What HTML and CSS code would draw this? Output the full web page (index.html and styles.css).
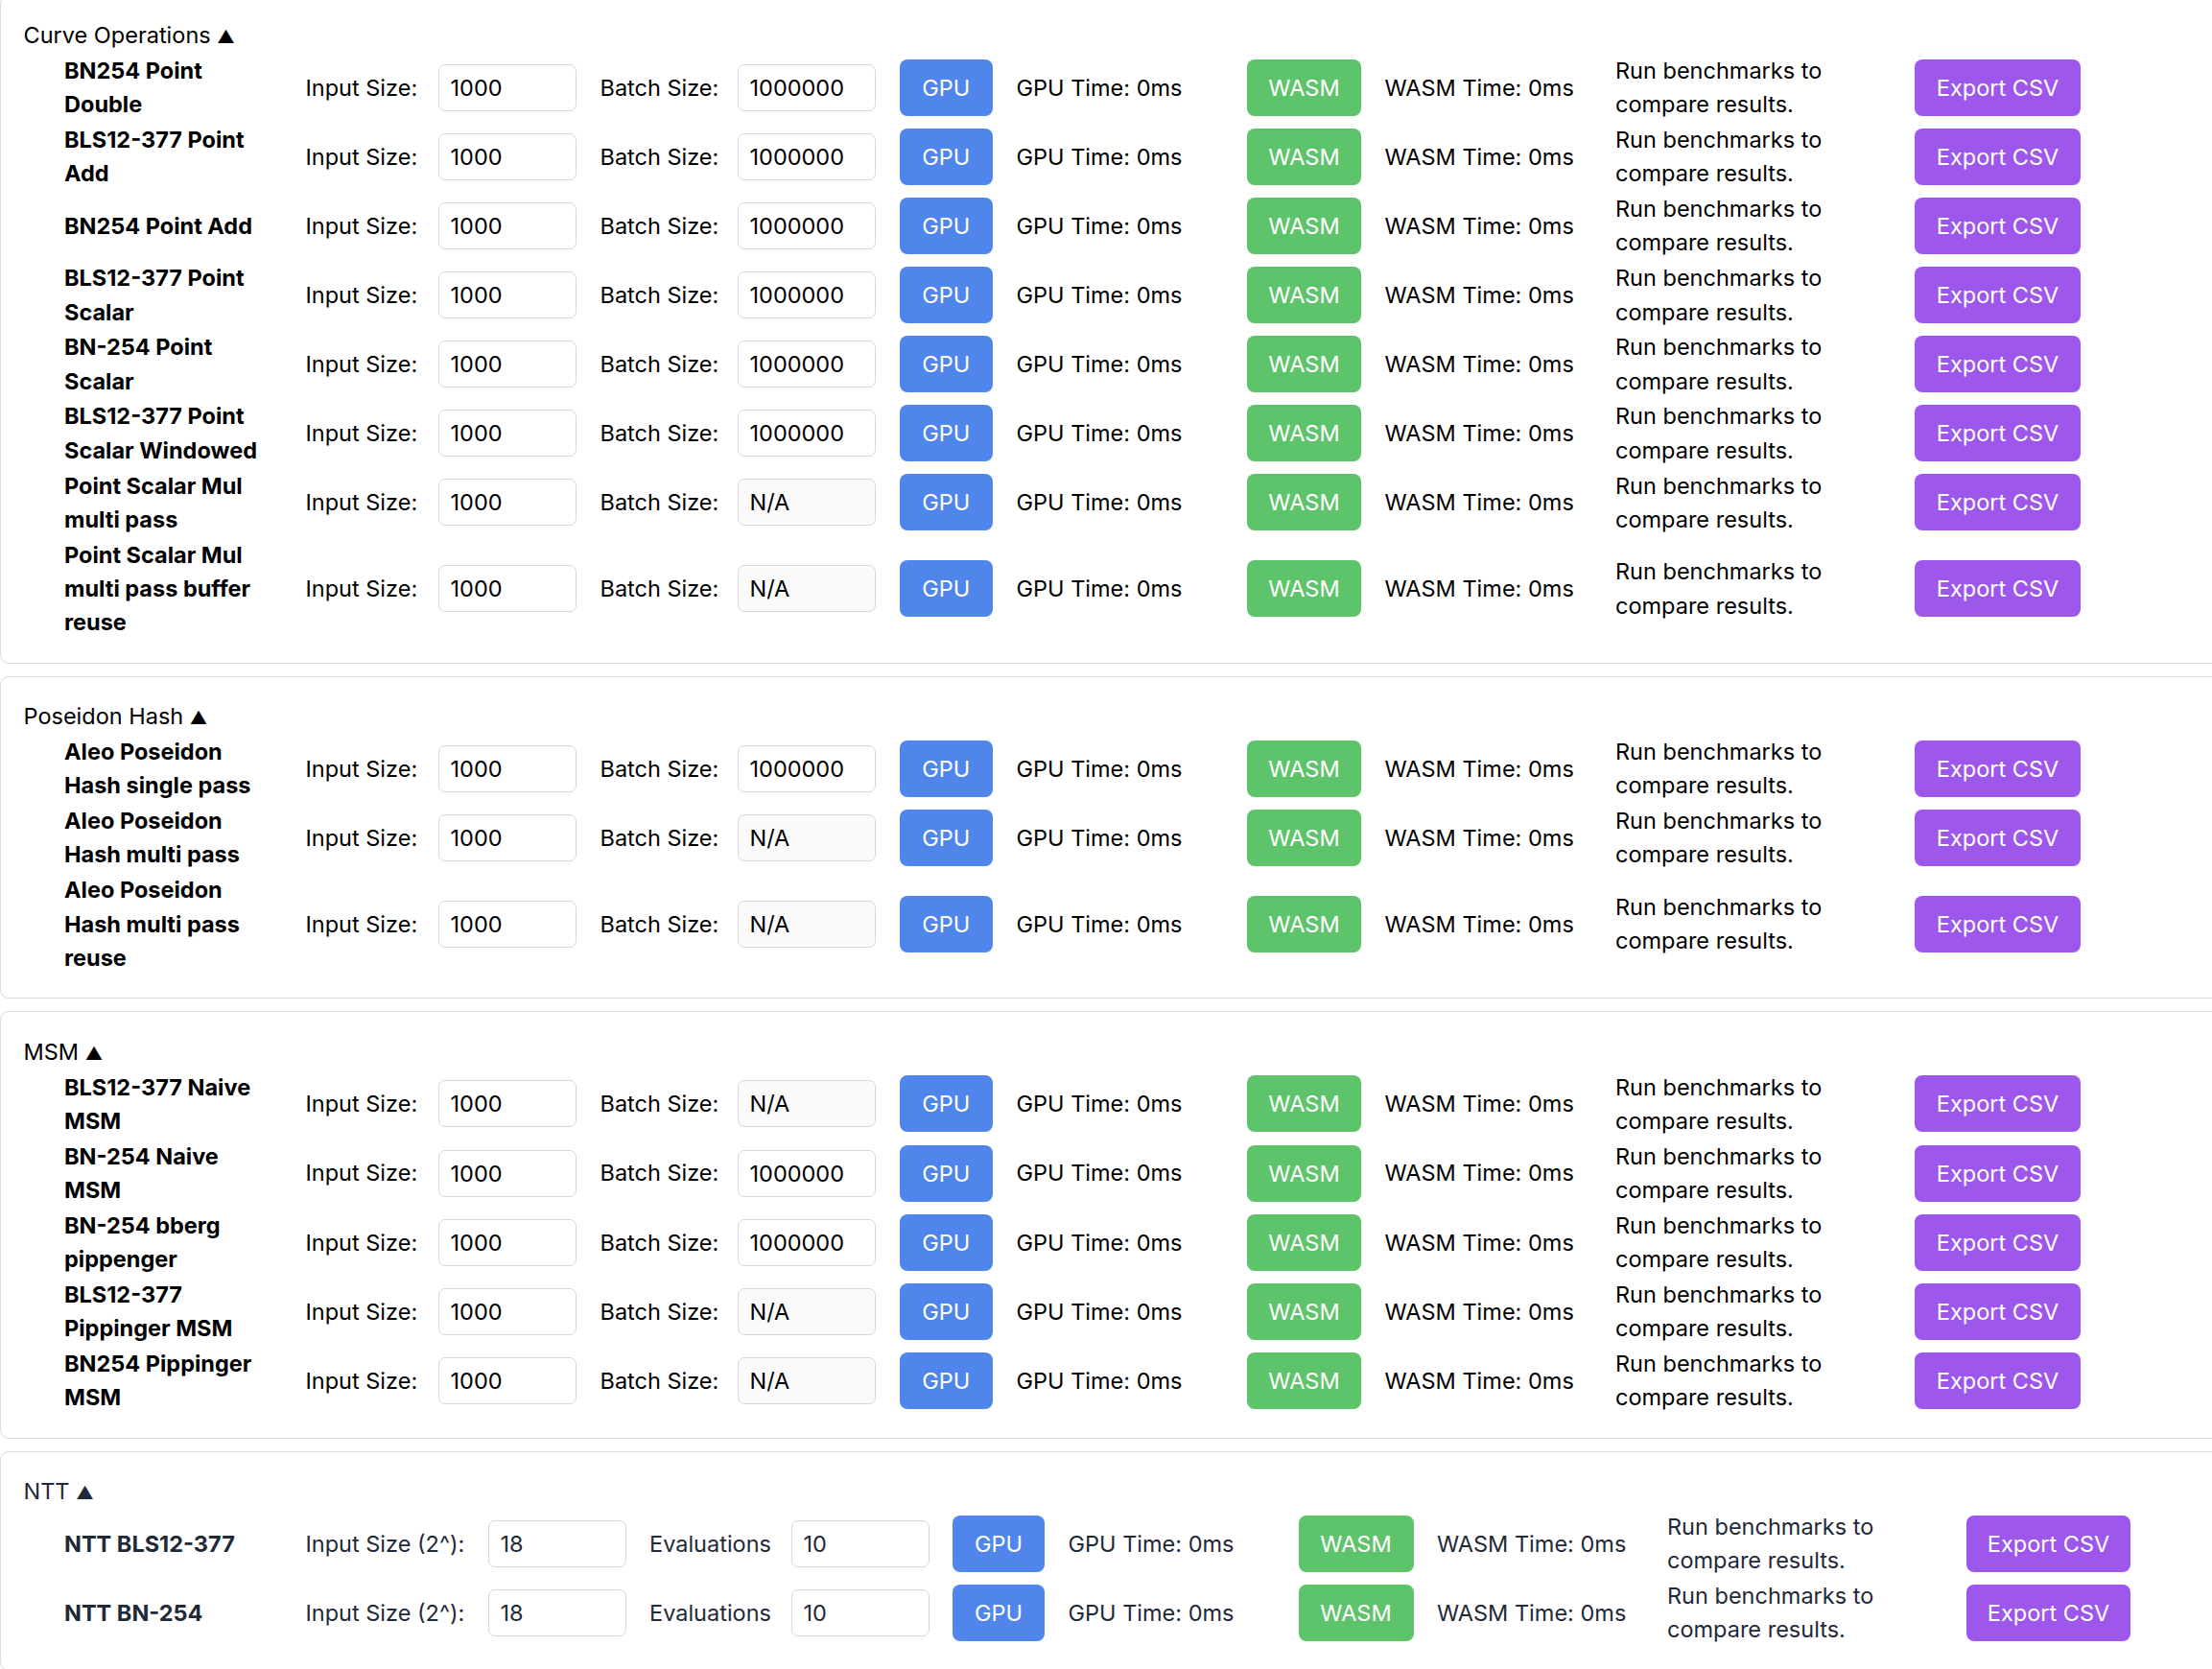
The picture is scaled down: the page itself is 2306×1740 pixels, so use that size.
FILE: index.html
```html
<!DOCTYPE html>
<html lang="en">
<head>
  <meta charset="UTF-8">
  <meta name="viewport" content="width=device-width, initial-scale=1.0">
  <title>WebGPU Benchmarks</title>
  <link rel="stylesheet" href="styles.css">
</head>
<body>

  <div class="page">

    <!-- Curve operations -->
    <section class="group">
      <div class="group-title">Curve Operations <span class="caret">▲</span></div>

      <div class="bench-row">
        <div class="bench-name">BN254 Point Double</div>
        <span class="field-label">Input Size:</span>
        <input class="field" type="text" value="1000">
        <span class="field-label">Batch Size:</span>
        <input class="field" type="text" value="1000000">
        <button class="btn btn-gpu">GPU</button>
        <span class="timing">GPU Time: 0ms</span>
        <button class="btn btn-wasm">WASM</button>
        <span class="timing">WASM Time: 0ms</span>
        <p class="result">Run benchmarks to compare results.</p>
        <button class="btn btn-export">Export CSV</button>
      </div>

      <div class="bench-row">
        <div class="bench-name">BLS12-377 Point Add</div>
        <span class="field-label">Input Size:</span>
        <input class="field" type="text" value="1000">
        <span class="field-label">Batch Size:</span>
        <input class="field" type="text" value="1000000">
        <button class="btn btn-gpu">GPU</button>
        <span class="timing">GPU Time: 0ms</span>
        <button class="btn btn-wasm">WASM</button>
        <span class="timing">WASM Time: 0ms</span>
        <p class="result">Run benchmarks to compare results.</p>
        <button class="btn btn-export">Export CSV</button>
      </div>

      <div class="bench-row">
        <div class="bench-name">BN254 Point Add</div>
        <span class="field-label">Input Size:</span>
        <input class="field" type="text" value="1000">
        <span class="field-label">Batch Size:</span>
        <input class="field" type="text" value="1000000">
        <button class="btn btn-gpu">GPU</button>
        <span class="timing">GPU Time: 0ms</span>
        <button class="btn btn-wasm">WASM</button>
        <span class="timing">WASM Time: 0ms</span>
        <p class="result">Run benchmarks to compare results.</p>
        <button class="btn btn-export">Export CSV</button>
      </div>

      <div class="bench-row">
        <div class="bench-name">BLS12-377 Point Scalar</div>
        <span class="field-label">Input Size:</span>
        <input class="field" type="text" value="1000">
        <span class="field-label">Batch Size:</span>
        <input class="field" type="text" value="1000000">
        <button class="btn btn-gpu">GPU</button>
        <span class="timing">GPU Time: 0ms</span>
        <button class="btn btn-wasm">WASM</button>
        <span class="timing">WASM Time: 0ms</span>
        <p class="result">Run benchmarks to compare results.</p>
        <button class="btn btn-export">Export CSV</button>
      </div>

      <div class="bench-row">
        <div class="bench-name">BN-254 Point Scalar</div>
        <span class="field-label">Input Size:</span>
        <input class="field" type="text" value="1000">
        <span class="field-label">Batch Size:</span>
        <input class="field" type="text" value="1000000">
        <button class="btn btn-gpu">GPU</button>
        <span class="timing">GPU Time: 0ms</span>
        <button class="btn btn-wasm">WASM</button>
        <span class="timing">WASM Time: 0ms</span>
        <p class="result">Run benchmarks to compare results.</p>
        <button class="btn btn-export">Export CSV</button>
      </div>

      <div class="bench-row">
        <div class="bench-name">BLS12-377 Point Scalar Windowed</div>
        <span class="field-label">Input Size:</span>
        <input class="field" type="text" value="1000">
        <span class="field-label">Batch Size:</span>
        <input class="field" type="text" value="1000000">
        <button class="btn btn-gpu">GPU</button>
        <span class="timing">GPU Time: 0ms</span>
        <button class="btn btn-wasm">WASM</button>
        <span class="timing">WASM Time: 0ms</span>
        <p class="result">Run benchmarks to compare results.</p>
        <button class="btn btn-export">Export CSV</button>
      </div>

      <div class="bench-row">
        <div class="bench-name">Point Scalar Mul multi pass</div>
        <span class="field-label">Input Size:</span>
        <input class="field" type="text" value="1000">
        <span class="field-label">Batch Size:</span>
        <input class="field" type="text" value="N/A" disabled>
        <button class="btn btn-gpu">GPU</button>
        <span class="timing">GPU Time: 0ms</span>
        <button class="btn btn-wasm">WASM</button>
        <span class="timing">WASM Time: 0ms</span>
        <p class="result">Run benchmarks to compare results.</p>
        <button class="btn btn-export">Export CSV</button>
      </div>

      <div class="bench-row">
        <div class="bench-name">Point Scalar Mul multi pass buffer reuse</div>
        <span class="field-label">Input Size:</span>
        <input class="field" type="text" value="1000">
        <span class="field-label">Batch Size:</span>
        <input class="field" type="text" value="N/A" disabled>
        <button class="btn btn-gpu">GPU</button>
        <span class="timing">GPU Time: 0ms</span>
        <button class="btn btn-wasm">WASM</button>
        <span class="timing">WASM Time: 0ms</span>
        <p class="result">Run benchmarks to compare results.</p>
        <button class="btn btn-export">Export CSV</button>
      </div>
    </section>

    <!-- Poseidon -->
    <section class="group">
      <div class="group-title">Poseidon Hash <span class="caret">▲</span></div>

      <div class="bench-row">
        <div class="bench-name">Aleo Poseidon Hash single pass</div>
        <span class="field-label">Input Size:</span>
        <input class="field" type="text" value="1000">
        <span class="field-label">Batch Size:</span>
        <input class="field" type="text" value="1000000">
        <button class="btn btn-gpu">GPU</button>
        <span class="timing">GPU Time: 0ms</span>
        <button class="btn btn-wasm">WASM</button>
        <span class="timing">WASM Time: 0ms</span>
        <p class="result">Run benchmarks to compare results.</p>
        <button class="btn btn-export">Export CSV</button>
      </div>

      <div class="bench-row">
        <div class="bench-name">Aleo Poseidon Hash multi pass</div>
        <span class="field-label">Input Size:</span>
        <input class="field" type="text" value="1000">
        <span class="field-label">Batch Size:</span>
        <input class="field" type="text" value="N/A" disabled>
        <button class="btn btn-gpu">GPU</button>
        <span class="timing">GPU Time: 0ms</span>
        <button class="btn btn-wasm">WASM</button>
        <span class="timing">WASM Time: 0ms</span>
        <p class="result">Run benchmarks to compare results.</p>
        <button class="btn btn-export">Export CSV</button>
      </div>

      <div class="bench-row">
        <div class="bench-name">Aleo Poseidon Hash multi pass reuse</div>
        <span class="field-label">Input Size:</span>
        <input class="field" type="text" value="1000">
        <span class="field-label">Batch Size:</span>
        <input class="field" type="text" value="N/A" disabled>
        <button class="btn btn-gpu">GPU</button>
        <span class="timing">GPU Time: 0ms</span>
        <button class="btn btn-wasm">WASM</button>
        <span class="timing">WASM Time: 0ms</span>
        <p class="result">Run benchmarks to compare results.</p>
        <button class="btn btn-export">Export CSV</button>
      </div>
    </section>

    <!-- MSM -->
    <section class="group">
      <div class="group-title">MSM <span class="caret">▲</span></div>

      <div class="bench-row">
        <div class="bench-name">BLS12-377 Naive MSM</div>
        <span class="field-label">Input Size:</span>
        <input class="field" type="text" value="1000">
        <span class="field-label">Batch Size:</span>
        <input class="field" type="text" value="N/A" disabled>
        <button class="btn btn-gpu">GPU</button>
        <span class="timing">GPU Time: 0ms</span>
        <button class="btn btn-wasm">WASM</button>
        <span class="timing">WASM Time: 0ms</span>
        <p class="result">Run benchmarks to compare results.</p>
        <button class="btn btn-export">Export CSV</button>
      </div>

      <div class="bench-row">
        <div class="bench-name">BN-254 Naive MSM</div>
        <span class="field-label">Input Size:</span>
        <input class="field" type="text" value="1000">
        <span class="field-label">Batch Size:</span>
        <input class="field" type="text" value="1000000">
        <button class="btn btn-gpu">GPU</button>
        <span class="timing">GPU Time: 0ms</span>
        <button class="btn btn-wasm">WASM</button>
        <span class="timing">WASM Time: 0ms</span>
        <p class="result">Run benchmarks to compare results.</p>
        <button class="btn btn-export">Export CSV</button>
      </div>

      <div class="bench-row">
        <div class="bench-name">BN-254 bberg pippenger</div>
        <span class="field-label">Input Size:</span>
        <input class="field" type="text" value="1000">
        <span class="field-label">Batch Size:</span>
        <input class="field" type="text" value="1000000">
        <button class="btn btn-gpu">GPU</button>
        <span class="timing">GPU Time: 0ms</span>
        <button class="btn btn-wasm">WASM</button>
        <span class="timing">WASM Time: 0ms</span>
        <p class="result">Run benchmarks to compare results.</p>
        <button class="btn btn-export">Export CSV</button>
      </div>

      <div class="bench-row">
        <div class="bench-name">BLS12-377 Pippinger MSM</div>
        <span class="field-label">Input Size:</span>
        <input class="field" type="text" value="1000">
        <span class="field-label">Batch Size:</span>
        <input class="field" type="text" value="N/A" disabled>
        <button class="btn btn-gpu">GPU</button>
        <span class="timing">GPU Time: 0ms</span>
        <button class="btn btn-wasm">WASM</button>
        <span class="timing">WASM Time: 0ms</span>
        <p class="result">Run benchmarks to compare results.</p>
        <button class="btn btn-export">Export CSV</button>
      </div>

      <div class="bench-row">
        <div class="bench-name">BN254 Pippinger MSM</div>
        <span class="field-label">Input Size:</span>
        <input class="field" type="text" value="1000">
        <span class="field-label">Batch Size:</span>
        <input class="field" type="text" value="N/A" disabled>
        <button class="btn btn-gpu">GPU</button>
        <span class="timing">GPU Time: 0ms</span>
        <button class="btn btn-wasm">WASM</button>
        <span class="timing">WASM Time: 0ms</span>
        <p class="result">Run benchmarks to compare results.</p>
        <button class="btn btn-export">Export CSV</button>
      </div>
    </section>

    <!-- NTT -->
    <section class="group group-ntt">
      <div class="group-title">NTT <span class="caret">▲</span></div>

      <div class="bench-row">
        <div class="bench-name">NTT BLS12-377</div>
        <span class="field-label">Input Size (2^):</span>
        <input class="field" type="text" value="18">
        <span class="field-label">Evaluations</span>
        <input class="field" type="text" value="10">
        <button class="btn btn-gpu">GPU</button>
        <span class="timing">GPU Time: 0ms</span>
        <button class="btn btn-wasm">WASM</button>
        <span class="timing">WASM Time: 0ms</span>
        <p class="result">Run benchmarks to compare results.</p>
        <button class="btn btn-export">Export CSV</button>
      </div>

      <div class="bench-row">
        <div class="bench-name">NTT BN-254</div>
        <span class="field-label">Input Size (2^):</span>
        <input class="field" type="text" value="18">
        <span class="field-label">Evaluations</span>
        <input class="field" type="text" value="10">
        <button class="btn btn-gpu">GPU</button>
        <span class="timing">GPU Time: 0ms</span>
        <button class="btn btn-wasm">WASM</button>
        <span class="timing">WASM Time: 0ms</span>
        <p class="result">Run benchmarks to compare results.</p>
        <button class="btn btn-export">Export CSV</button>
      </div>
    </section>

  </div>

</body>
</html>
```

FILE: styles.css
```css
html, body {
  overflow: hidden;
}

body {
  margin: 0;
  background: #fff;
  font-family: Inter, "Noto Sans", sans-serif;
  font-size: 23.5px;
  line-height: 35.3px;
  color: #000;
}

/* page is scrolled a few px down */
.page {
  margin-top: -5.25px;
}

/* Benchmark groups */
.group {
  width: 2330px;
  box-sizing: border-box;
  padding: 23.5px;
  border: 1.5px solid #dcdce0;
  border-radius: 9px;
  background: #fff;
  margin-bottom: 13px;
}

.group-title {
  height: 35.3px;
  margin-bottom: 0.75px;
}

.caret {
  font-size: 0.78em;
}

.bench-row {
  display: grid;
  grid-template-columns: 227px 114px 144px 119px 144px 97.5px 216px 119px 216px 287.5px 173px;
  column-gap: 24.5px;
  align-items: center;
  min-height: 72px;
  margin-left: 42.5px;
}

.group-ntt {
  color: #1f2937;
}

.group-ntt .bench-row {
  grid-template-columns: 227px 166px 143.5px 123.5px 143.5px 96px 215.5px 120px 215.5px 287.5px 171px;
}

.bench-name {
  font-weight: 700;
  padding: 0.75px 9px 0.75px 0;
}

.field-label,
.timing {
  white-space: nowrap;
}

.field {
  width: 100%;
  height: 49px;
  box-sizing: border-box;
  padding: 0 11.5px;
  border: 1.5px solid #d8d8dc;
  border-radius: 7px;
  background: #fff;
  font-family: inherit;
  font-size: 23.5px;
  color: inherit;
}

.field:disabled {
  background: #fafafa;
  color: inherit;
}

.result {
  margin: 0;
  max-width: 240px;
}

/* Buttons */
.btn {
  width: 100%;
  height: 59px;
  padding: 0;
  border: none;
  border-radius: 8px;
  font-family: inherit;
  font-size: 23.5px;
  color: #fff;
  cursor: pointer;
}

.btn-gpu {
  background-color: #5085ec;
}

.btn-wasm {
  background-color: #5ec46b;
}

.btn-export {
  background-color: #9d58eb;
}
```
